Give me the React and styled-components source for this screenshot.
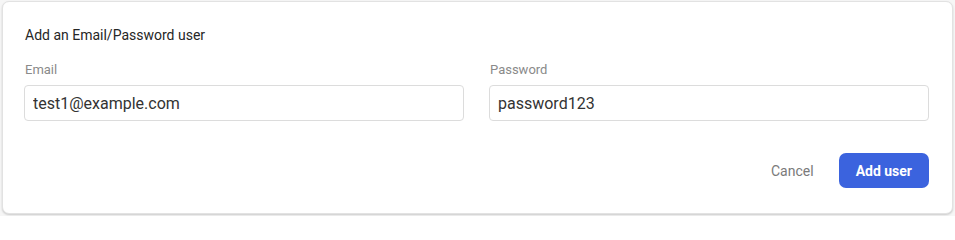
import React from "react";
import styled, { createGlobalStyle } from "styled-components";

const Global = createGlobalStyle`
  html, body { margin: 0; padding: 0; background: #ffffff; }
  body { font-family: Roboto, "Noto Sans", Arial, sans-serif; }
  * { box-sizing: border-box; }
`;

const Page = styled.div`
  width: 955px;
  height: 216px;
  padding: 1px 2px 2px 2px;
  background: #f6f6f6;
`;

const Card = styled.div`
  height: 100%;
  background: #ffffff;
  border: 1px solid #e2e2e2;
  border-radius: 7px;
  box-shadow: 0 1px 2px rgba(0, 0, 0, 0.18);
  padding: 25px 23px 24px 21px;
  display: flex;
  flex-direction: column;
`;

const Title = styled.div`
  font-size: 14px;
  color: #262626;
  line-height: 16px;
  margin-bottom: 19px;
  padding-left: 1px;
`;

const Fields = styled.div`
  display: grid;
  grid-template-columns: 1fr 1fr;
  column-gap: 25px;
`;

const Field = styled.label`
  display: flex;
  flex-direction: column;
`;

const Label = styled.span`
  font-size: 13px;
  color: #8a8a8a;
  line-height: 15px;
  margin-bottom: 8px;
  padding-left: 1px;
`;

const Input = styled.input`
  height: 36px;
  border: 1px solid #dcdcdc;
  border-radius: 4px;
  padding: 0 8px;
  font-family: Roboto, "Noto Sans", Arial, sans-serif;
  font-size: 16px;
  color: #333333;
  outline: none;
  background: #fff;
`;

const Actions = styled.div`
  display: flex;
  justify-content: flex-end;
  align-items: center;
  gap: 25px;
  margin-top: 32px;
`;

const Button = styled.button`
  height: 35px;
  border-radius: 7px;
  border: none;
  font-family: Roboto, "Noto Sans", Arial, sans-serif;
  font-size: 14px;
  cursor: pointer;
  padding: 0 ${(p) => (p.$primary ? "17px" : "0")};
  background: ${(p) => (p.$primary ? "#3b63de" : "transparent")};
  color: ${(p) => (p.$primary ? "#ffffff" : "#7a7a7a")};
  font-weight: ${(p) => (p.$primary ? 700 : 400)};
`;

export default function App() {
  return (
    <>
      <Global />
      <Page>
        <Card>
          <Title>Add an Email/Password user</Title>
          <Fields>
            <Field>
              <Label>Email</Label>
              <Input defaultValue="test1@example.com" />
            </Field>
            <Field>
              <Label>Password</Label>
              <Input defaultValue="password123" />
            </Field>
          </Fields>
          <Actions>
            <Button>Cancel</Button>
            <Button $primary>Add user</Button>
          </Actions>
        </Card>
      </Page>
    </>
  );
}
